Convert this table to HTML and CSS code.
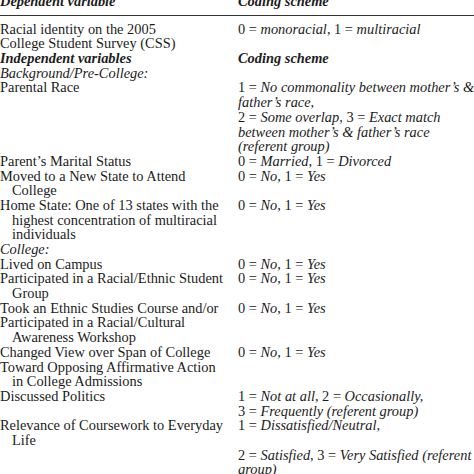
FILE: index.html
```html
<!DOCTYPE html>
<html>
<head>
<meta charset="utf-8">
<link rel="stylesheet" href="styles.css">
</head>
<body>
<div class="table">
  <div class="head">
    <div class="cell"><div class="l"><b><i>Dependent variable</i></b></div></div>
    <div class="cell"><div class="l"><b><i>Coding scheme</i></b></div></div>
  </div>
  <div class="body">
    <div class="cell"><div class="l">Racial identity on the 2005</div><div class="l">College Student Survey (CSS)</div></div>
    <div class="cell"><div class="l">0 = <i>monoracial</i>, 1 = <i>multiracial</i></div></div>

    <div class="cell"><div class="l"><b><i>Independent variables</i></b></div></div>
    <div class="cell"><div class="l"><b><i>Coding scheme</i></b></div></div>

    <div class="cell"><div class="l"><i>Background/Pre-College:</i></div></div>
    <div class="cell"></div>

    <div class="cell"><div class="l">Parental Race</div></div>
    <div class="cell">
      <div class="l">1 = <i>No commonality between mother’s &amp;</i></div>
      <div class="l"><i>father’s race,</i></div>
      <div class="l">2 = <i>Some overlap,</i> 3 = <i>Exact match</i></div>
      <div class="l"><i>between mother’s &amp; father’s race</i></div>
      <div class="l"><i>(referent group)</i></div>
    </div>

    <div class="cell"><div class="l">Parent’s Marital Status</div></div>
    <div class="cell"><div class="l">0 = <i>Married</i>, 1 = <i>Divorced</i></div></div>

    <div class="cell"><div class="l">Moved to a New State to Attend</div><div class="l in">College</div></div>
    <div class="cell"><div class="l">0 = <i>No</i>, 1 = <i>Yes</i></div></div>

    <div class="cell"><div class="l">Home State: One of 13 states with the</div><div class="l in">highest concentration of multiracial</div><div class="l in">individuals</div></div>
    <div class="cell"><div class="l">0 = <i>No</i>, 1 = <i>Yes</i></div></div>

    <div class="cell"><div class="l"><i>College:</i></div></div>
    <div class="cell"></div>

    <div class="cell"><div class="l">Lived on Campus</div></div>
    <div class="cell"><div class="l">0 = <i>No</i>, 1 = <i>Yes</i></div></div>

    <div class="cell"><div class="l">Participated in a Racial/Ethnic Student</div><div class="l in">Group</div></div>
    <div class="cell"><div class="l">0 = <i>No</i>, 1 = <i>Yes</i></div></div>

    <div class="cell"><div class="l">Took an Ethnic Studies Course and/or</div><div class="l">Participated in a Racial/Cultural</div><div class="l in">Awareness Workshop</div></div>
    <div class="cell"><div class="l">0 = <i>No</i>, 1 = <i>Yes</i></div></div>

    <div class="cell"><div class="l">Changed View over Span of College</div><div class="l">Toward Opposing Affirmative Action</div><div class="l in">in College Admissions</div></div>
    <div class="cell"><div class="l">0 = <i>No</i>, 1 = <i>Yes</i></div></div>

    <div class="cell"><div class="l">Discussed Politics</div></div>
    <div class="cell"><div class="l">1 = <i>Not at all</i>, 2 = <i>Occasionally,</i></div><div class="l">3 = <i>Frequently (referent group)</i></div></div>

    <div class="cell"><div class="l">Relevance of Coursework to Everyday</div><div class="l in">Life</div></div>
    <div class="cell"><div class="l">1 = <i>Dissatisfied/Neutral,</i></div><div class="l blank"></div><div class="l">2 = <i>Satisfied</i>, 3 = <i>Very Satisfied (referent</i></div><div class="l"><i>group)</i></div></div>
  </div>
</div>
</body>
</html>
```
FILE: styles.css
```css
html, body {
  margin: 0;
  padding: 0;
  background: #ffffff;
  overflow: hidden;
}
body {
  font-family: "Liberation Serif", "Times New Roman", serif;
  font-size: 14.4px;
  line-height: 14.7px;
  color: #1c1c1c;
  width: 474px;
  height: 474px;
}
.table {
  display: flex;
  flex-direction: column;
  margin-top: -6px;
}
.head, .body {
  display: grid;
  grid-template-columns: 238px 1fr;
}
.head {
  padding-bottom: 6px;
  border-bottom: 1.5px solid #333333;
  padding-top: 0;
}
.body {
  padding-top: 6px;
}
.cell {
  min-width: 0;
}
.l {
  white-space: nowrap;
  height: 14.7px;
}
.in {
  padding-left: 12px;
}
b {
  font-weight: bold;
}
```
